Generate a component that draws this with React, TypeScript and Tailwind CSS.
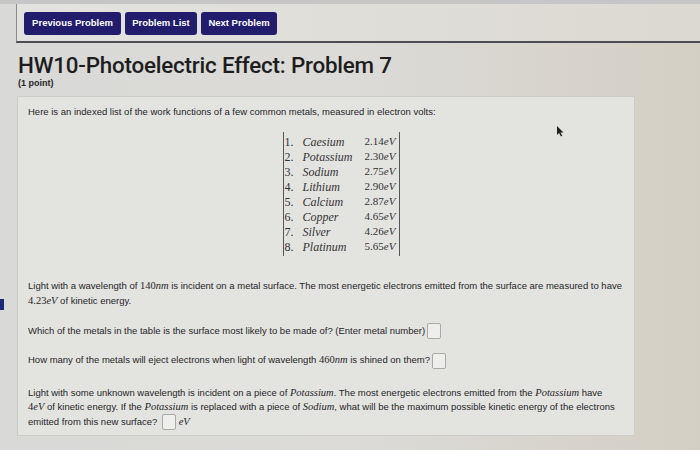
import React from "react";

const serif = { fontFamily: '"Liberation Serif", "Times New Roman", serif' };

function M({ children }: { children: React.ReactNode }) {
  return (
    <span className="text-[10.5px] italic" style={serif}>
      {children}
    </span>
  );
}

function Num({ children }: { children: React.ReactNode }) {
  return (
    <span className="text-[10.5px]" style={serif}>
      {children}
    </span>
  );
}

function Box() {
  return (
    <span className="inline-block align-middle ml-[2px] w-[14px] h-[16px] border border-[#a9a9a6] bg-[#eeeeec] rounded-[2px]" />
  );
}

const rows: [string, string, string][] = [
  ["1.", "Caesium", "2.14"],
  ["2.", "Potassium", "2.30"],
  ["3.", "Sodium", "2.75"],
  ["4.", "Lithium", "2.90"],
  ["5.", "Calcium", "2.87"],
  ["6.", "Copper", "4.65"],
  ["7.", "Silver", "4.26"],
  ["8.", "Platinum", "5.65"],
];

export default function App() {
  return (
    <div
      className="relative w-[700px] h-[450px] overflow-hidden bg-linear-to-r from-[#d9d9d7] via-[#dcdbd8] to-[#d4cfc4] text-[#262628]"
      style={{ fontFamily: '"Liberation Sans", Arial, sans-serif' }}
    >
      {/* top strip */}
      <div className="h-[4px] bg-[#c6c6c6]" />
      {/* nav bar */}
      <div className="ml-[16px] h-[39px] bg-linear-to-r from-[#e2e2e0] to-[#dcd9d1] border-l border-b-2 border-l-[#8a8a8c] border-b-[#4c4d55] flex items-start gap-[4px] pl-[7px] pt-[8px]">
        <button className="h-[23px] w-[97px] rounded-[3px] bg-[#211c6c] text-white text-[9.5px] font-bold">
          Previous Problem
        </button>
        <button className="h-[23px] w-[72px] rounded-[3px] bg-[#211c6c] text-white text-[9.5px] font-bold">
          Problem List
        </button>
        <button className="h-[23px] w-[76px] rounded-[3px] bg-[#211c6c] text-white text-[9.5px] font-bold">
          Next Problem
        </button>
      </div>

      {/* title */}
      <div className="pl-[18px] pt-[10px]">
        <h1 className="text-[22.4px] leading-[25px] font-medium text-[#1d1d20] tracking-[-0.2px]" style={{ fontFamily: 'Roboto, "Liberation Sans", sans-serif' }}>
          HW10-Photoelectric Effect: Problem 7
        </h1>
        <div className="text-[9px] font-bold leading-[12px] mt-[-1px]">(1 point)</div>
      </div>

      {/* problem box */}
      <div className="ml-[17px] mt-[7px] w-[618px] h-[340px] bg-[#e3e3e0] border border-[#cbcbc7] pl-[10px] pt-[8px] text-[9.5px]">
        <p className="leading-[14px]">
          Here is an indexed list of the work functions of a few common metals, measured in electron volts:
        </p>

        <div className="flex justify-center mt-[13px] pl-[20px]">
          <div className="border-l border-r border-[#555] py-[2px]" style={serif}>
            {rows.map(([n, name, v]) => (
              <div key={n} className="flex h-[15px] items-center text-[12px] text-[#333335]">
                <span className="w-[19px] pl-[1px]">{n}</span>
                <span className="w-[62px] italic">{name}</span>
                <span className="w-[34px] text-[11px]">
                  {v}
                  <span className="italic">eV</span>
                </span>
              </div>
            ))}
          </div>
        </div>

        <p className="leading-[15px] mt-[22px] whitespace-nowrap">
          Light with a wavelength of <Num>140</Num><M>nm</M> is incident on a metal surface. The most energetic electrons emitted from the surface are measured to have
          <br />
          <Num>4.23</Num><M>eV</M> of kinetic energy.
        </p>

        <p className="leading-[15px] mt-[15px] whitespace-nowrap">
          Which of the metals in the table is the surface most likely to be made of? (Enter metal number)
          <Box />
        </p>

        <p className="leading-[15px] mt-[13px] whitespace-nowrap">
          How many of the metals will eject electrons when light of wavelength <Num>460</Num><M>nm</M> is shined on them?
          <Box />
        </p>

        <p className="leading-[14px] mt-[17px] whitespace-nowrap">
          Light with some unknown wavelength is incident on a piece of <M>Potassium</M>. The most energetic electrons emitted from the <M>Potassium</M> have
          <br />
          <Num>4</Num><M>eV</M> of kinetic energy. If the <M>Potassium</M> is replaced with a piece of <M>Sodium</M>, what will be the maximum possible kinetic energy of the electrons
          <br />
          emitted from this new surface? <Box /> <M>eV</M>
        </p>
      </div>

      {/* left edge marker */}
      <div className="absolute left-0 top-[299px] w-[4px] h-[11px] bg-[#1d2a7a]" />

      {/* cursor */}
      <svg className="absolute left-[556px] top-[126px]" width="8" height="11" viewBox="0 0 8 11">
        <path d="M1 0 L1 9 L3 7 L5 10.5 L6.3 9.8 L4.5 6.6 L7.5 6.6 Z" fill="#222" />
      </svg>
    </div>
  );
}
